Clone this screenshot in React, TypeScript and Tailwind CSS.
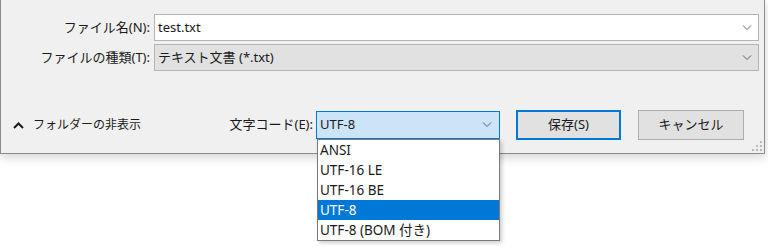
import { useState } from 'react'

const encodings = ['ANSI', 'UTF-16 LE', 'UTF-16 BE', 'UTF-8', 'UTF-8 (BOM 付き)']

function ChevronDown() {
  return (
    <svg width="10" height="6" viewBox="0 0 10 6" className="shrink-0">
      <path d="M1 0.5 L5 4.5 L9 0.5" fill="none" stroke="#606060" strokeWidth="1" />
    </svg>
  )
}

function ResizeGrip() {
  const dots = [
    [8, 0],
    [4, 4],
    [8, 4],
    [0, 8],
    [4, 8],
    [8, 8],
  ]
  return (
    <svg width="10" height="10" viewBox="0 0 10 10">
      {dots.map(([x, y]) => (
        <rect key={`${x}-${y}`} x={x} y={y} width="2" height="2" fill="#b8b8b8" />
      ))}
    </svg>
  )
}

export default function App() {
  const [selected] = useState('UTF-8')

  return (
    <div
      className="relative h-[247px] w-[768px] overflow-hidden bg-white text-[13px] text-[#1a1a1a]"
      style={{ fontFamily: '"Noto Sans", "Noto Sans CJK JP", sans-serif' }}
    >
      {/* dialog body */}
      <div className="relative h-[154px] w-[765px] border-b border-l border-r border-[#8c8c8c] bg-[#f0f0f0] shadow-[0_3px_10px_rgba(0,0,0,0.18)]">
        <div className="grid grid-cols-[149px_605px] gap-x-[4px] gap-y-[3px] pt-[14px]">
          <div className="flex h-[27px] items-center justify-end">ファイル名(N):</div>
          <div className="flex h-[27px] items-center justify-between border border-[#b4b4b4] bg-white pl-[3px] pr-[6px]">
            <span>test.txt</span>
            <ChevronDown />
          </div>
          <div className="flex h-[27px] items-center justify-end">ファイルの種類(T):</div>
          <div className="flex h-[27px] items-center justify-between border border-[#b4b4b4] bg-[#e1e1e1] pl-[3px] pr-[6px]">
            <span>テキスト文書 (*.txt)</span>
            <ChevronDown />
          </div>
        </div>

        <div className="mt-[39px] flex h-[30px] items-center">
          <div className="flex w-[228px] items-center gap-[9px] pl-[12px]">
            <svg width="11" height="7" viewBox="0 0 11 7">
              <path d="M1 6 L5.5 1.5 L10 6" fill="none" stroke="#1a1a1a" strokeWidth="2" />
            </svg>
            <span className="text-[12px]">フォルダーの非表示</span>
          </div>
          <div className="w-[84px] text-right">文字コード(E):</div>
          <div className="relative ml-[3px]">
            <div className="flex h-[28px] w-[184px] items-center justify-between border border-[#0078d7] bg-[#cce4f7] pl-[3px] pr-[7px]">
              <span>{selected}</span>
              <ChevronDown />
            </div>
            <div className="absolute left-[1px] top-full z-10 w-[183px] border border-[#7a7a7a] bg-white shadow-[2px_2px_4px_rgba(0,0,0,0.2)]">
              {encodings.map((e) => (
                <div
                  key={e}
                  className={
                    e === selected
                      ? 'flex h-[20px] items-center bg-[#0078d7] pl-[2px] text-[13.5px] text-white'
                      : 'flex h-[20px] items-center pl-[2px] text-[13.5px]'
                  }
                >
                  {e}
                </div>
              ))}
            </div>
          </div>
          <button className="ml-[16px] flex h-[30px] w-[105px] items-center justify-center border-2 border-[#0078d7] bg-[#e1e1e1]">
            保存(S)
          </button>
          <button className="ml-[17px] flex h-[30px] w-[106px] items-center justify-center border border-[#adadad] bg-[#e1e1e1]">
            キャンセル
          </button>
        </div>

        <div className="absolute bottom-[2px] right-[2px]">
          <ResizeGrip />
        </div>
      </div>
    </div>
  )
}
